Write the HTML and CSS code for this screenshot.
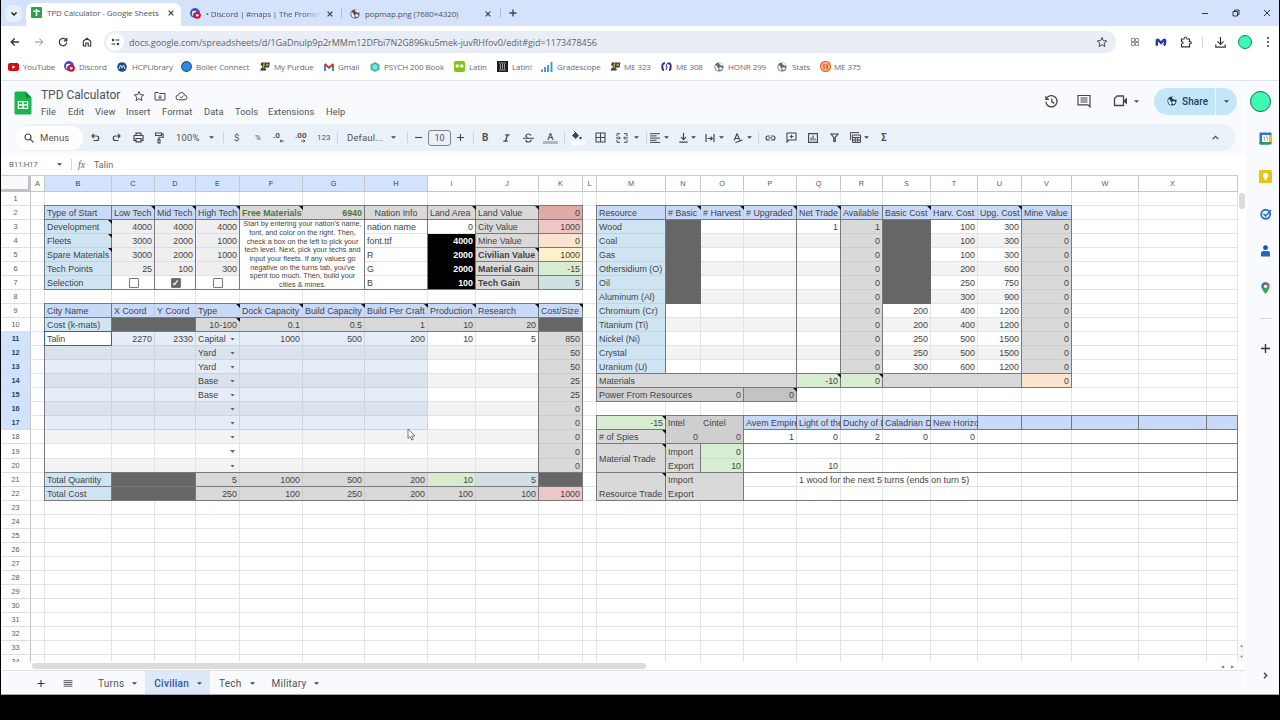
FILE: index.html
```html
<!DOCTYPE html>
<html lang="en">
<head>
<meta charset="utf-8">
<title>TPD Calculator - Google Sheets</title>
<link rel="stylesheet" href="styles.css">
</head>
<body>
<svg class="defs" width="0" height="0">
  <symbol id="globe" viewBox="0 0 24 24"><circle cx="12" cy="12" r="11" fill="currentColor"/><path d="M3 8c4 0 5 2 5 4s3 2 3 5-1 3-1 5c-5-2-8-7-7-14zM13 2c-2 2-1 4 1 4s2 3 4 3 3-1 4-1c-1-3-4-6-9-6zM13 13c3-1 7 0 7 2s-3 5-5 5-1-3-2-4-1-2 0-3z" fill="#f5f7fa"/></symbol>
  <symbol id="discord" viewBox="0 0 22 22"><circle cx="10" cy="10" r="10" fill="#4a53c4"/><path d="M5 6h8l-2 3-4 1-1 5H4z" fill="#fff"/><circle cx="14.500" cy="14.500" r="7.200" fill="#c8193f"/><circle cx="14.500" cy="14.500" r="2.600" fill="#fff"/></symbol>
  <symbol id="close" viewBox="0 0 10 10"><path d="M2 2l6 6M8 2l-6 6" stroke="#3c4043" stroke-width="1.500"/></symbol>
  <symbol id="caret" viewBox="0 0 10 10"><path d="M0 2.500h10L5 7.500z" fill="#444746"/></symbol>
  <symbol id="train" viewBox="0 0 24 20"><path d="M4 1h19l-2 11h-8l-1 3h3l-1 4H1l2-5h2l1-6H2z" fill="#3d3a27"/><path d="M8 3h4l-2 11H7zM15 4h5l-1 5h-5z" fill="#b9a56a"/></symbol>
  <symbol id="star" viewBox="0 0 24 24"><path d="M12 3l2.700 6.300 6.800.600-5.200 4.500 1.600 6.700L12 17.500l-5.900 3.600 1.600-6.700L2.500 9.900l6.800-.600z" fill="none" stroke="#444746" stroke-width="2"/></symbol>
</svg>

<div class="window">
  <div class="tabstrip">
    <span class="tab-search"><svg width="8" height="8" viewBox="0 0 8 8"><path d="M1.500 2.500L4 5l2.500-2.500" fill="none" stroke="#202124" stroke-width="1.500"/></svg></span>
    <div class="tab active">
      <svg width="11" height="11" viewBox="0 0 11 11"><rect width="11" height="11" rx="1" fill="#2ba24c"/><path d="M2 4.300h7M5.500 2v7" stroke="#fff" stroke-width="1.600"/></svg>
      <span class="tab-title">TPD Calculator - Google Sheets</span>
      <svg width="8" height="8"><use href="#close"/></svg>
    </div>
    <div class="tab">
      <svg width="11" height="11"><use href="#discord"/></svg>
      <span class="tab-title faded">• Discord | #maps | The Promet</span>
      <svg width="8" height="8"><use href="#close"/></svg>
    </div>
    <i class="tab-sep"></i>
    <div class="tab third">
      <svg width="10" height="10"><use href="#globe"/></svg>
      <span class="tab-title">popmap.png (7680×4320)</span>
      <svg width="8" height="8"><use href="#close"/></svg>
    </div>
    <i class="tab-sep"></i>
    <svg class="new-tab" width="8" height="8" viewBox="0 0 8 8"><path d="M4 .5v7M.5 4h7" stroke="#3c4043" stroke-width="1.300"/></svg>
    <div class="winbtns">
      <svg width="8" height="8" viewBox="0 0 8 8"><path d="M1 4.500h6" stroke="#202124" stroke-width=".9"/></svg>
      <svg width="8" height="8" viewBox="0 0 8 8"><path d="M1 2.500h4.500v4.500H1zM2.500 2.500V1h4.500v4.500H5.500" fill="none" stroke="#202124" stroke-width=".9"/></svg>
      <svg width="8" height="8" viewBox="0 0 8 8"><path d="M1 1l6 6M7 1L1 7" stroke="#202124" stroke-width=".9"/></svg>
    </div>
  </div>

  <div class="addressbar">
    <svg width="10" height="10" viewBox="0 0 10 10"><path d="M9 5H1.500M4.700 1.500L1.200 5l3.500 3.500" fill="none" stroke="#333" stroke-width="1.300"/></svg>
    <svg width="10" height="10" viewBox="0 0 10 10"><path d="M1 5h7.500M5.300 1.500L8.800 5 5.300 8.500" fill="none" stroke="#8b8f94" stroke-width="1"/></svg>
    <svg width="10" height="10" viewBox="0 0 10 10"><path d="M8.700 5.500A3.700 3.700 0 1 1 7.600 2.400L8.500 3.500M8.800 .8v3H5.800" fill="none" stroke="#333" stroke-width="1.200"/></svg>
    <svg width="10" height="10" viewBox="0 0 10 10"><path d="M1.300 4.200L5 1.200l3.700 3V9H6.200V6H3.800v3H1.300z" fill="none" stroke="#333" stroke-width="1.100"/></svg>
    <div class="omnibox">
      <span class="tune"><svg width="9" height="8" viewBox="0 0 9 8"><path d="M4.500 2h4M.5 6h4" stroke="#333" stroke-width="1.200"/><circle cx="2" cy="2" r="1.200" fill="#333"/><circle cx="7" cy="6" r="1.200" fill="#333"/></svg></span>
      <span class="url">docs.google.com/spreadsheets/d/1GaDnulp9p2rMMm12DFbi7N2G896ku5mek-juvRHfov0/edit#gid=1173478456</span>
      <svg width="12" height="12"><use href="#star"/></svg>
    </div>
    <div class="exts">
      <svg width="8" height="8" viewBox="0 0 8 8"><path d="M.5 .5h3v3h-3zM4.500 .5h3v3h-3zM.5 4.500h3v3h-3zM4.500 4.500h3v3h-3z" fill="none" stroke="#777" stroke-width=".8"/></svg>
      <svg width="12" height="10" viewBox="0 0 12 10"><path d="M1.800 8.800V4.500Q1.800 2 3.300 3L6 6 8.700 3Q10.200 2 10.200 4.500q0 3-1.500 3.800" fill="none" stroke="#2136b0" stroke-width="2.400"/></svg>
      <svg width="12" height="12" viewBox="0 0 12 12"><path d="M1.500 3H4Q4.300 1 5.500 1T7 3h2.500v2.500Q11.300 5.500 11.300 6.700T9.500 8v2.800h-8V8Q3 8 3 6.800T1.500 5.500z" fill="none" stroke="#333" stroke-width="1.200"/></svg>
      <i></i>
      <svg width="11" height="11" viewBox="0 0 11 11"><path d="M5.500 0v7M2.500 4.300l3 3 3-3M.8 7.500v2.700h9.400V7.500" fill="none" stroke="#333" stroke-width="1.200"/></svg>
      <span class="avatar"></span>
      <svg width="4" height="12" viewBox="0 0 4 12"><g fill="#333"><circle cx="2" cy="2" r="1"/><circle cx="2" cy="6" r="1"/><circle cx="2" cy="10" r="1"/></g></svg>
    </div>
  </div>

  <div class="bookmarks">
    <svg width="11" height="8" viewBox="0 0 11 8"><rect width="11" height="8" rx="2" fill="#d40b14"/><path d="M4.300 2.200v3.600L7.300 4z" fill="#fff"/></svg><span>YouTube</span>
    <svg width="11" height="11"><use href="#discord"/></svg><span>Discord</span>
    <svg width="10" height="10" viewBox="0 0 10 10"><circle cx="5" cy="5" r="4.800" fill="#1f4e86"/><path d="M2 7l1.500-4L5 6l1.500-3L8 7" stroke="#cfe0f2" fill="none"/></svg><span>HCPLibrary</span>
    <svg width="11" height="11" viewBox="0 0 11 11"><circle cx="5.500" cy="5.500" r="4.900" fill="#2e8be0" stroke="#1a5296" stroke-width="1.100"/></svg><span>Boiler Connect</span>
    <svg width="12" height="9"><use href="#train"/></svg><span>My Purdue</span>
    <svg width="10" height="8" viewBox="0 0 10 8"><path d="M1 8V1.500" stroke="#4285f4" stroke-width="2"/><path d="M9 8V1.500" stroke="#34a853" stroke-width="2"/><path d="M.7 1L5 4.700 9.300 1" fill="none" stroke="#d93025" stroke-width="2"/></svg><span>Gmail</span>
    <svg width="10" height="10" viewBox="0 0 10 10"><path d="M5 0l4.500 2.500v5L5 10 .5 7.500v-5z" fill="#3cb8a9"/><path d="M5 2l2.500 1.500v3L5 8 2.500 6.500v-3z" fill="#8bded3"/></svg><span>PSYCH 200 Book</span>
    <svg width="11" height="11" viewBox="0 0 11 11"><rect width="11" height="11" rx="2" fill="#7ac70c"/><circle cx="3.200" cy="5" r="1.800" fill="#fff"/><circle cx="7.800" cy="5" r="1.800" fill="#fff"/></svg><span>Latin</span>
    <svg width="11" height="11" viewBox="0 0 11 11"><rect width="11" height="11" fill="#1d1d1d"/><path d="M2 2h7M2 9h7M3.500 3v5M5.500 3v5M7.500 3v5" stroke="#9a9a9a"/></svg><span>Latin!</span>
    <svg width="12" height="10" viewBox="0 0 12 10"><path d="M1 10V7.500M4 10V5M7 10V3M10.500 10V0" stroke="#3b8fd6" stroke-width="1.800"/></svg><span>Gradescope</span>
    <svg width="11" height="9"><use href="#train"/></svg><span>ME 323</span>
    <svg width="11" height="9" viewBox="0 0 11 9"><path d="M4 1.200Q1.300 1 1.300 4.500T3 8M7 1.200Q9.700 1 9.700 4.500T8 8" fill="none" stroke="#2a3690" stroke-width="2"/><path d="M6.500 1L5 4.500l1.200.5L5 8" stroke="#2a3690" fill="none"/></svg><span>ME 308</span>
    <svg width="10" height="10"><use href="#globe"/></svg><span>HONR 299</span>
    <svg width="10" height="10"><use href="#globe"/></svg><span>Stats</span>
    <svg width="11" height="11" viewBox="0 0 11 11"><circle cx="5.500" cy="5.500" r="5" fill="#f7b98c" stroke="#dd6a2c" stroke-width="1.200"/><path d="M4 3v5M6.500 3q2 2.500 0 5" stroke="#c9561b" fill="none" stroke-width="1.200"/></svg><span>ME 375</span>
  </div>

  <div class="docs">
    <div class="docs-main">
      <div class="docs-header">
        <svg class="logo" width="18" height="24" viewBox="0 0 18 24"><path d="M2 .5h9.500l6 6V22a1.500 1.500 0 0 1-1.500 1.500H2A1.500 1.500 0 0 1 .5 22V2A1.500 1.500 0 0 1 2 .5z" fill="#16b64a"/><path d="M11.500 .5l6 6h-6z" fill="#0b8a35"/><path d="M3.700 10h10.600v8H3.700zM5 11.300v2h3.400v-2zm4.700 0v2H13v-2zM5 14.700v2h3.400v-2zm4.700 0v2H13v-2z" fill="#fff" fill-rule="evenodd"/></svg>
        <div class="titles">
          <div class="title-row">
            <span class="doc-title">TPD Calculator</span>
            <svg width="12" height="12"><use href="#star"/></svg>
            <svg width="12" height="12" viewBox="0 0 12 12"><path d="M1 2.500h3.500l1 1H11V10H1zM6 5v3.500M4.300 7L6 8.500 7.700 7" fill="none" stroke="#444746" stroke-width="1"/></svg>
            <svg width="13" height="12" viewBox="0 0 13 12"><path d="M3.500 9.800Q1 9.800 1 7.500T3.200 5.200Q4 2.500 6.500 2.500T9.900 5.300Q12 5.500 12 7.500T10 9.800zM4.800 6.700L6.200 8l2.400-2.500" fill="none" stroke="#444746" stroke-width="1"/></svg>
          </div>
          <div class="menus"><span>File</span><span>Edit</span><span>View</span><span>Insert</span><span>Format</span><span>Data</span><span>Tools</span><span>Extensions</span><span>Help</span></div>
        </div>
        <div class="actions">
          <svg width="15" height="15" viewBox="0 0 24 24"><path d="M4 7.500A9 9 0 1 1 3 12.500M3 3.500v5h5M12.500 7v5.500l4 2.500" fill="none" stroke="#444746" stroke-width="2"/></svg>
          <svg width="14" height="14" viewBox="0 0 14 14"><path d="M1 1.500h12v11.300l-2-2H1zM3.500 4h7M3.500 6h7M3.500 8h7" fill="none" stroke="#444746" stroke-width="1.200"/></svg>
          <svg width="15" height="14" viewBox="0 0 15 14"><path d="M4 2h6.500v9.500H1.500V4.500z" fill="none" stroke="#444746" stroke-width="1.300" stroke-linejoin="round"/><path d="M10.500 6.500L14 3.500v7l-3.500-3z" fill="#444746"/></svg>
          <svg width="5" height="5"><use href="#caret"/></svg>
          <div class="share"><svg width="10" height="10"><use href="#globe"/></svg><b>Share</b><i></i><svg width="5" height="5"><use href="#caret"/></svg></div>
        </div>
      </div>

      <div class="toolbar">
        <div class="menus-pill"><svg width="10" height="10" viewBox="0 0 10 10"><circle cx="4" cy="4" r="3" fill="none" stroke="#444746" stroke-width="1.200"/><path d="M6.200 6.200l3.300 3.300" stroke="#444746" stroke-width="1.200"/></svg><span>Menus</span></div>
        <svg width="9" height="9" viewBox="0 0 9 9"><path d="M3 1L1 3l2 2M1 3h4.500a2.200 2.200 0 0 1 0 4.500H2.500" fill="none" stroke="#444746" stroke-width="1.200"/></svg>
        <svg width="9" height="9" viewBox="0 0 9 9"><path d="M6 1l2 2-2 2M8 3H3.500a2.200 2.200 0 0 0 0 4.500H6.500" fill="none" stroke="#444746" stroke-width="1.200"/></svg>
        <svg width="11" height="11" viewBox="0 0 11 11"><path d="M3 3.500V1.200h5v2.300M3 8.500H1v-5h9v5H8M3 6.500h5v3.300H3z" fill="none" stroke="#444746" stroke-width="1.200"/></svg>
        <svg width="10" height="12" viewBox="0 0 10 12"><path d="M1.500 1h6v2.500h-6zM7.500 2h1.700v3.300H5v2M4 7.500h2v3.500H4z" fill="none" stroke="#444746" stroke-width="1.100"/></svg>
        <span class="t10">100%</span>
        <svg width="5" height="5"><use href="#caret"/></svg>
        <i></i>
        <span>$</span>
        <span class="small">%</span>
        <span class="dec">.0<svg width="5" height="4" viewBox="0 0 5 4"><path d="M5 2H1M2.500 .5L1 2l1.500 1.500" fill="none" stroke="#444746" stroke-width=".9"/></svg></span>
        <span class="dec">.00<svg width="5" height="4" viewBox="0 0 5 4"><path d="M0 2h4M2.500 .5L4 2 2.500 3.500" fill="none" stroke="#444746" stroke-width=".9"/></svg></span>
        <span class="small">123</span>
        <i></i>
        <span class="t10">Defaul...</span>
        <svg width="5" height="5"><use href="#caret"/></svg>
        <i></i>
        <svg width="7" height="7" viewBox="0 0 7 7"><path d="M0 3.500h7" stroke="#444746" stroke-width="1.100"/></svg>
        <span class="size">10</span>
        <svg width="7" height="7" viewBox="0 0 7 7"><path d="M0 3.500h7M3.500 0v7" stroke="#444746" stroke-width="1.100"/></svg>
        <i></i>
        <b>B</b>
        <svg width="7" height="8" viewBox="0 0 7 8"><path d="M2.200 .8h4.500M.3 7.200h4.500M4.600 .8L2.400 7.200" stroke="#444746" stroke-width="1.300"/></svg>
        <svg width="11" height="10" viewBox="0 0 11 10"><path d="M0 5.300h11" stroke="#444746"/><path d="M8 2.700Q7.500 1 5.500 1T3 2.500t1.500 1.800M8 6.500Q8.200 9 5.500 9T2.800 7" fill="none" stroke="#444746" stroke-width="1.200"/></svg>
        <span class="acolor">A</span>
        <i></i>
        <svg class="fill" width="14" height="15" viewBox="0 0 14 15"><rect y="11" width="14" height="4" fill="#fff"/><path d="M3 1l4.500 4.500L4.700 8.500 1.500 5.500 4.500 2.500" fill="#444746" stroke="#444746"/><circle cx="9.500" cy="8" r="1.200" fill="#444746"/></svg>
        <svg width="11" height="11" viewBox="0 0 11 11"><path d="M1 1h9v9H1zM5.500 1v9M1 5.500h9" fill="none" stroke="#444746" stroke-width="1.100"/></svg>
        <svg width="12" height="10" viewBox="0 0 12 10"><path d="M4 .7H1v2.500M1 6.800v2.500h3M8 .7h3v2.500M11 6.800v2.500H8M0 5h4M2.800 3.500L4.300 5 2.800 6.500M12 5H8M9.200 3.500L7.700 5l1.500 1.500" fill="none" stroke="#444746" stroke-width="1"/></svg>
        <svg width="5" height="5"><use href="#caret"/></svg>
        <i></i>
        <svg width="10" height="10" viewBox="0 0 10 10"><path d="M0 .7h10M0 2.900h6.500M0 5.100h10M0 7.300h6.500M0 9.400h10" stroke="#444746" stroke-width="1"/></svg>
        <svg width="5" height="5"><use href="#caret"/></svg>
        <svg width="9" height="10" viewBox="0 0 9 10"><path d="M4.500 0v6.500M2 4.200l2.500 2.500L7 4.200M.3 9.200h8.400" fill="none" stroke="#444746" stroke-width="1.200"/></svg>
        <svg width="5" height="5"><use href="#caret"/></svg>
        <svg width="10" height="10" viewBox="0 0 10 10"><path d="M1 1v8M9 1v8M2.500 5.500h4.500M5.500 3.700L7.300 5.500 5.500 7.300" fill="none" stroke="#444746" stroke-width="1.200"/></svg>
        <svg width="5" height="5"><use href="#caret"/></svg>
        <svg width="10" height="10" viewBox="0 0 10 10"><path d="M1 7.500L4 .8l3 6.700M2 5.500h4M2.500 9.500L9.500 7" fill="none" stroke="#444746" stroke-width="1.100"/></svg>
        <svg width="5" height="5"><use href="#caret"/></svg>
        <i></i>
        <svg width="11" height="6" viewBox="0 0 11 6"><path d="M4.800 1H3a2 2 0 0 0 0 4h1.800M6.200 1H8a2 2 0 0 1 0 4H6.200M3.500 3h4" fill="none" stroke="#444746" stroke-width="1.100"/></svg>
        <svg width="11" height="11" viewBox="0 0 11 11"><path d="M1 10V1h9v7H3zM5.500 2.700v3.600M3.700 4.500h3.600" fill="none" stroke="#444746" stroke-width="1.100"/></svg>
        <svg width="10" height="10" viewBox="0 0 10 10"><path d="M.6 .6h8.800v8.800H.6zM3 7.500V4.500M5 7.500v-5M7 7.500V5.500" fill="none" stroke="#444746" stroke-width="1.100"/></svg>
        <svg width="9" height="9" viewBox="0 0 9 9"><path d="M1 1h7L5.200 4.500v4H3.800v-4z" fill="none" stroke="#444746" stroke-width="1.200"/></svg>
        <svg width="11" height="11" viewBox="0 0 11 11"><path d="M.6 8V.6H9M2.500 3h8v7.400h-8zM2.500 5.500h8M2.500 8h8M5.200 5.500v5M7.800 5.500v5" fill="none" stroke="#444746" stroke-width="1"/></svg>
        <svg width="5" height="5"><use href="#caret"/></svg>
        <b>Σ</b>
        <svg class="collapse" width="7" height="5" viewBox="0 0 7 5"><path d="M.7 4.200L3.500 1.400l2.800 2.800" fill="none" stroke="#444746" stroke-width="1.200"/></svg>
      </div>

      <div class="formula">
        <span class="namebox">B11:H17</span>
        <svg width="5" height="5"><use href="#caret"/></svg>
        <i></i>
        <em>fx</em>
        <span>Talin</span>
      </div>

      <div class="sheet-area">
        <div class="sheet" id="sheet"></div>
        <div class="vscroll"><i class="thumb"></i><div class="arrows"><span>▲</span><span>▼</span></div></div>
      </div>
      <div class="hscroll"><i class="thumb"></i><div class="arrows"><span>◀</span><span>▶</span></div></div>
      <div class="sheet-tabs">
        <svg width="8" height="8" viewBox="0 0 8 8"><path d="M0 4h8M4 0v8" stroke="#333" stroke-width="1.200"/></svg>
        <svg class="list" width="10" height="8" viewBox="0 0 10 8"><path d="M0 .8h10M0 2.900h10M0 5h10M0 7.100h10" stroke="#444746" stroke-width="1"/></svg>
        <div class="stab turns">Turns<svg width="5" height="5"><use href="#caret"/></svg></div>
        <div class="stab on">Civilian<svg width="5" height="5"><use href="#caret"/></svg></div>
        <div class="stab">Tech<svg width="5" height="5"><use href="#caret"/></svg></div>
        <div class="stab">Military<svg width="5" height="5"><use href="#caret"/></svg></div>
      </div>
    </div>

    <aside class="side">
      <span class="avatar big"></span>
      <svg width="13" height="13" viewBox="0 0 13 13"><rect x=".5" y=".5" width="12" height="12" rx="1" fill="#2f74d0"/><path d="M10 3h2.500v7H10z" fill="#f6bd16"/><path d="M.5 10H10v2.500H1.500q-1 0-1-1z" fill="#2f9e50"/><path d="M10 10h2.500L10 12.500z" fill="#e04a35"/><path d="M3 3h7v7H3z" fill="#fff"/><path d="M4.300 5h1.200v3.500M7 5h1.400v3.500" fill="none" stroke="#5d98e4" stroke-width=".8"/></svg>
      <svg width="13" height="13" viewBox="0 0 13 13"><rect width="13" height="13" rx="1.500" fill="#edc01d"/><circle cx="6.500" cy="5.500" r="2.700" fill="#fff"/><path d="M5.300 8h2.400v2H5.300z" fill="#fff"/></svg>
      <svg width="12" height="12" viewBox="0 0 12 12"><circle cx="5.700" cy="6.300" r="4.500" fill="none" stroke="#2a70cf" stroke-width="1.900"/><path d="M3.500 5.800l2.200 2.200L11 2" fill="none" stroke="#2a70cf" stroke-width="1.600"/></svg>
      <svg width="9" height="12" viewBox="0 0 9 12"><circle cx="4.500" cy="2.700" r="2.400" fill="#174ea6"/><path d="M0 11.500V8.300Q0 6 2.300 6h4.400Q9 6 9 8.300v3.200z" fill="#2563c4"/></svg>
      <svg width="9" height="12" viewBox="0 0 9 12"><path d="M4.500 12Q.5 7.500.5 4.300A4 4 0 0 1 8.500 4.300Q8.500 7.500 4.500 12z" fill="#34a853"/><path d="M4.500 .3v4L1 6.500Q-.8 1.500 4.500 .3z" fill="#3a6fd0"/><path d="M4.500 .3Q8 .5 8.500 3.500L5 4z" fill="#d7553f"/><circle cx="4.500" cy="4.300" r="1.600" fill="#fff"/></svg>
      <hr>
      <svg width="9" height="9" viewBox="0 0 9 9"><path d="M0 4.500h9M4.500 0v9" stroke="#333" stroke-width="1.400"/></svg>
      <svg class="side-toggle" width="5" height="7" viewBox="0 0 5 7"><path d="M1 .8l2.700 2.700L1 6.200" fill="none" stroke="#444746" stroke-width="1.400"/></svg>
    </aside>
  </div>
  <svg class="cursor" width="9" height="13" viewBox="0 0 9 13"><path d="M1 1v9.500l2.200-2L4.800 12l1.500-.700-1.500-3.300H8z" fill="#fff" stroke="#555" stroke-width=".8"/></svg>
</div>
<script src="sheet.js"></script>
</body>
</html>
```
FILE: sheet.js
```js
const sheet = document.getElementById('sheet');
const LAST_ROW = 34;
const COLS = 'ABCDEFGHIJKLMNOPQRSTUVWXY';
const colNo = c => COLS.indexOf(c) + 2;

function parse(range) {
  const [a, b = a] = range.split(':');
  return { c1: colNo(a[0]), r1: +a.slice(1) + 1, c2: colNo(b[0]) + 1, r2: +b.slice(1) + 2 };
}
function add(range, cls, text = '') {
  const p = parse(range);
  const el = document.createElement('div');
  el.className = cls;
  el.style.gridArea = `${p.r1} / ${p.c1} / ${p.r2} / ${p.c2}`;
  if (text !== '') {
    const s = document.createElement('span');
    s.textContent = text;
    el.append(s);
  }
  sheet.append(el);
  return el;
}
// Fills every cell of a range with one background class.
function fill(range, cls) {
  const p = parse(range);
  for (let r = p.r1; r < p.r2; r++)
    for (let c = p.c1; c < p.c2; c++) add(COLS[c - 2] + (r - 1), 'cell ' + cls);
}
const box = (...ranges) => ranges.forEach(r => add(r, 'box'));
const lab = (ref, t, cls = '') => add(ref, 'txt ' + cls, t);
const num = (ref, t, cls = '') => add(ref, 'txt num ' + cls, t);
const row = (from, n, vals, fn = num) => vals.forEach((v, i) => v !== '' && fn(COLS[COLS.indexOf(from) + i] + n, v));
const column = (c, n, vals, fn = num) => vals.forEach((v, i) => v !== '' && fn(c + (n + i), v));

// Headers
const corner = document.createElement('div');
corner.className = 'corner';
sheet.append(corner);
[...COLS].forEach((c, i) => {
  const el = add(c + '0', 'colhead' + (i >= 1 && i <= 7 ? ' sel' : ''), c === 'Y' ? '' : c);
  el.style.gridRow = '1';
});
for (let r = 1; r <= LAST_ROW; r++) {
  const el = add('A' + r, 'rowhead' + (r >= 11 && r <= 17 ? ' sel' : ''), r);
  el.style.gridColumn = '1';
}
fill('A1:Y' + LAST_ROW, '');

// Start options
fill('B2:E2', 'head'); fill('B3:B7', 'blue'); fill('C3:E6', 'pale');
fill('F2:J2', 'grey'); fill('J3:J7', 'grey');
add('F3:G7', 'cell blank');
add('I4:I7', 'cell black');
['red', 'pink', 'orange', 'yellow', 'green', 'teal'].forEach((c, i) => fill('K' + (i + 2), c));
row('B', 2, ['Type of Start', 'Low Tech', 'Mid Tech', 'High Tech'], lab);
column('B', 3, ['Development', 'Fleets', 'Spare Materials', 'Tech Points', 'Selection'], lab);
[[4000, 4000, 4000], [3000, 2000, 1000], [3000, 2000, 1000], [25, 100, 300]].forEach((v, i) => row('C', i + 3, v));
['C7', 'D7', 'E7'].forEach(r => { add(r, 'check' + (r === 'D7' ? ' checked' : ''), r === 'D7' ? '✓' : ''); });
lab('F2', 'Free Materials', 'money'); num('G2', 6940, 'money');
add('F3:G7', 'help', "Start by entering your nation's name,\nfont, and color on the right. Then,\ncheck a box on the left to pick your\ntech level. Next, pick your techs and\ninput your fleets. If any values go\nnegative on the turns tab, you've\nspent too much. Then, build your\ncities & mines.");
lab('H2', 'Nation Info', 'mid'); lab('I2', 'Land Area');
column('H', 3, ['nation name', 'font.ttf', 'R', 'G', 'B'], lab);
num('I3', 0);
column('I', 4, [4000, 2000, 2000, 100], (r, v) => num(r, v, 'white'));
column('J', 2, ['Land Value', 'City Value', 'Mine Value'], lab);
column('J', 5, ['Civilian Value', 'Material Gain', 'Tech Gain'], (r, v) => lab(r, v, 'bold'));
column('K', 2, [0, 1000, 0, 1000, -15, 5]);
box('B2:E2', 'B2:B7', 'C2:C7', 'D2:D7', 'E2:E7', 'F2:G2', 'F2:G7', 'H2', 'H2:H7', 'I2', 'I2:I7', 'J2', 'J3', 'J4', 'J5', 'J6', 'J7', 'K2', 'K3', 'K4', 'K5', 'K6', 'K7');

// Cities
fill('B9:K9', 'head'); fill('B10', 'blue'); fill('C10:D10', 'dark'); fill('E10:J10', 'grey'); fill('K10', 'dark');
[12, 14, 16, 18, 20].forEach(r => fill(`B${r}:J${r}`, 'band'));
fill('K11:K20', 'grey');
fill('B21:B22', 'blue'); fill('C21:D22', 'dark'); fill('E21:H21', 'grey'); fill('E22:J22', 'grey');
fill('I21', 'green'); fill('J21', 'teal'); fill('K21', 'dark'); fill('K22', 'pink');
add('B11:H17', 'selection');
row('B', 9, ['City Name', 'X Coord', 'Y Coord', 'Type', 'Dock Capacity', 'Build Capacity', 'Build Per Craft', 'Production', 'Research', 'Cost/Size'], lab);
lab('B10', 'Cost (k-mats)'); row('E', 10, ['10-100', '0.1', '0.5', 1, 10, 20]);
row('C', 11, [2270, 2330, '', 1000, 500, 200, 10, 5, 850]);
column('E', 11, ['Capital', 'Yard', 'Yard', 'Base', 'Base'], lab);
for (let r = 11; r <= 20; r++) add('E' + r, 'drop');
column('K', 12, [50, 50, 25, 25, 0, 0, 0, 0, 0]);
lab('B21', 'Total Quantity'); lab('B22', 'Total Cost');
row('E', 21, [5, 1000, 500, 200, 10, 5]);
row('E', 22, [250, 100, 250, 200, 100, 100, 1000]);
box('B9:K9', 'B9:K10', 'B9:B10', 'B21:B22', 'B9:K22', 'K9:K22', 'K10', 'E10:J10', 'B21:K21', 'B21:K22', 'C21:D22');
add('B11', 'active-cell', 'Talin');

// Resources
fill('M2:V2', 'head'); fill('M3:M13', 'blue');
[4, 6, 8, 10, 12].forEach(r => { fill(`N${r}:Q${r}`, 'band'); fill(`S${r}:U${r}`, 'band'); });
add('N3:N8', 'cell dark'); add('S3:S8', 'cell dark');
fill('R3:R13', 'grey'); fill('V3:V13', 'grey');
add('M14:P14', 'cell grey'); fill('Q14:R14', 'green'); add('S14:U14', 'cell grey'); fill('V14', 'orange');
add('M15:N15', 'cell grey2'); fill('O15', 'grey2'); fill('P15', 'grey3');
row('M', 2, ['Resource', '# Basic', '# Harvest', '# Upgraded', 'Net Trade', 'Available', 'Basic Cost', 'Harv. Cost', 'Upg. Cost', 'Mine Value'], lab);
column('M', 3, ['Wood', 'Coal', 'Gas', 'Othersidium (O)', 'Oil', 'Aluminum (Al)', 'Chromium (Cr)', 'Titanium (Ti)', 'Nickel (Ni)', 'Crystal', 'Uranium (U)', 'Materials'], lab);
lab('M15', 'Power From Resources');
num('Q3', 1); num('Q14', -10);
column('R', 3, [1, 0, 0, 0, 0, 0, 0, 0, 0, 0, 0, 0]);
column('S', 9, [200, 200, 250, 250, 300]);
column('T', 3, [100, 100, 100, 200, 250, 300, 400, 400, 500, 500, 600]);
column('U', 3, [300, 300, 300, 600, 750, 900, 1200, 1200, 1500, 1500, 1200]);
column('V', 3, [0, 0, 0, 0, 0, 0, 0, 0, 0, 0, 0, 0]);
row('O', 15, [0, 0]);
box('M2:V2', 'M2:M13', 'Q2:Q13', 'R2:R14', 'V2:V14', 'M14:P14', 'Q14', 'M14:V14', 'M15:P15', 'P15');

// Trade
fill('M17', 'green'); fill('N17:O18', 'grey2'); fill('P17:Y17', 'head');
fill('M18', 'grey'); add('M19:M20', 'cell grey'); add('M21:M22', 'cell grey');
fill('N19:N20', 'grey'); fill('O19:O20', 'green'); add('N21:O22', 'cell grey');
num('M17', -15); lab('N17', 'Intel'); lab('O17', 'Cintel');
row('P', 17, ['Avem Empire', 'Light of the', 'Duchy of L', 'Caladrian D', 'New Horizon'], (r, v) => lab(r, v, 'clip'));
lab('M18', '# of Spies'); row('N', 18, [0, 0, 1, 0, 2, 0, 0]);
lab('M19:M20', 'Material Trade'); lab('M22', 'Resource Trade');
column('N', 19, ['Import', 'Export', 'Import', 'Export'], lab);
num('O19', 0); num('O20', 10); num('Q20', 10);
lab('Q21', '1 wood for the next 5 turns (ends on turn 5)');
box('M17', 'M17:M22', 'N17:O18', 'O19:O20', 'M17:O22', 'M17:Y18', 'M19:Y20', 'M21:Y22', 'P17', 'Q17', 'R17', 'S17', 'T17', 'U17', 'V17', 'W17', 'X17', 'Y17');

// Note markers
'C2 D2 E2 F2 B3 B4 B5 I2 J2 J5 N2 O2 P2 Q2 S2 U2 E9 F9 G9 H9 I9 J9 K9 E10 Q14 R14 P15 M17 M18 M19 M21'.split(' ').forEach(r => add(r, 'note'));
```
FILE: styles.css
```css
* { box-sizing: border-box; }
body { margin: 0; background: #000; font-family: "Open Sans", sans-serif; color: #505356; }
svg { display: block; flex: none; }
i { display: block; flex: none; }
.defs { position: absolute; }
.window { position: relative; width: 1278px; height: 695px; margin-left: 1px; overflow: hidden; background: #fff; border-bottom: 1px solid #a4a7aa; display: flex; flex-direction: column; }

.tabstrip { height: 26px; flex: none; background: #d4e3fb; display: flex; align-items: center; font-size: 8px; color: #505357; }
.tab-search { width: 17px; height: 17px; margin: 1px 4px 0; border-radius: 6px; background: #e6effc; display: grid; place-items: center; }
.tab { display: flex; align-items: center; height: 22px; margin-top: 4px; padding: 0 6px 3px 5px; width: 155px; }
.tab.active { background: #fff; border-radius: 7px 7px 0 0; height: 24px; padding-bottom: 5px; }
.tab:not(.active) { padding-left: 9px; width: 160px; padding-right: 7px; }
.tab.third { padding-left: 8px; width: 158px; padding-right: 8px; }
.tab-title { margin-left: 5px; flex: 1; min-width: 0; white-space: nowrap; overflow: hidden; letter-spacing: -.1px; }
.faded { flex: 0 0 115px; margin-right: auto; letter-spacing: -.17px; -webkit-mask-image: linear-gradient(90deg, #000 85%, transparent); mask-image: linear-gradient(90deg, #000 85%, transparent); }
.tab-sep { width: 1px; height: 10px; background: #a9bddb; }
.new-tab { margin-left: 8px; }
.winbtns { margin-left: auto; display: flex; gap: 23px; padding-right: 8px; }

.addressbar { height: 28px; flex: none; margin-top: 2px; display: grid; align-items: center; grid-template-columns: 24px 24px 24px 22px 1012px 1fr; padding-left: 9px; }
.omnibox { height: 22px; border-radius: 11px; background: #e9edf6; display: flex; align-items: center; padding: 0 8px 0 2px; }
.tune { width: 18px; height: 18px; border-radius: 50%; background: #fff; display: grid; place-items: center; }
.url { flex: 1; margin-left: 5px; font-size: 9px; letter-spacing: -.02px; white-space: nowrap; color: #606368; }
.exts { display: grid; grid-template-columns: 24px 25px 22px 13px 23px 28px 8px; align-items: center; padding-left: 15px; }
.exts i { width: 1px; height: 10px; background: #ccd3dd; }
.avatar { width: 14px; height: 14px; border-radius: 50%; background: #3dfbb2; border: 1px solid #16805c; }
.avatar.big { width: 21px; height: 21px; border: 1px solid #18664a; }

.bookmarks { height: 25px; flex: none; border-bottom: 1px solid #dfe4ea; display: grid; align-items: center; font-size: 8px; letter-spacing: -.1px; white-space: nowrap; color: #66696e; padding: 0 0 3px 7px;
  grid-template-columns: 15px 41px 15px 38px 15px 49px 15px 63px 15px 50px 14px 32px 14px 70px 15px 28px 15px 29px 16px 53px 14px 37px 15px 38px 14px 49px 15px 28px 14px 40px; }

.docs { flex: 1; display: flex; min-height: 0; background: #f8fafd; }
.docs-main { width: 1244px; flex: none; display: flex; flex-direction: column; min-height: 0; font-family: Roboto, sans-serif; }
.docs-header { height: 43px; flex: none; display: flex; padding-left: 13px; }
.logo { margin-top: 10px; }
.titles { margin-left: 9px; }
.title-row { display: grid; grid-template-columns: 92px 21px 21px 13px; align-items: center; height: 16px; margin-top: 6px; }
.doc-title { font-size: 12px; letter-spacing: -.05px; white-space: nowrap; }
.title-row svg { margin-top: 2px; }
.menus { display: grid; grid-template-columns: 27px 27px 31px 36px 42px 31px 33px 58px 30px; font-size: 9.300px; letter-spacing: .1px; margin-top: 3px; line-height: 12px; }
.actions { margin-left: auto; display: grid; grid-template-columns: 33px 36px 21px 20px 83px; align-items: center; height: 40px; padding-right: 8px; }
.share { width: 83px; height: 27px; border-radius: 14px; background: #c4e6f9; display: flex; align-items: center; padding-left: 13px; font-size: 10px; color: #17415f; }
.share b { margin-left: 5px; width: 33px; font-weight: 500; letter-spacing: .1px; }
.share i { width: 1px; height: 27px; background: #edf7fd; margin: 0 8px 0 0; }

.toolbar { height: 27px; flex: none; margin-left: 15px; width: 1219px; border-radius: 14px; background: #eaf1f9; display: grid; align-items: center; font-size: 9.500px; white-space: nowrap;
  grid-template-columns: 75px 21px 21px 21px 22px 33px 14px 11px 21px 18px 22px 22px 20px 10px 44px 16px 8px 13px 29px 16px 9px 21px 20px 20px 21px 7px 24px 21px 18px 12px 4px 14px 15px 12px 14px 14px 14px 14px 11px 7px 21px 22px 22px 20px 14px 17px 331px 7px; }
.toolbar i, .formula i { width: 1px; height: 11px; background: #cbd2dc; }
.toolbar b { font-size: 10px; }
.small { font-size: 8px; }
.t10 { font-size: 9.500px; letter-spacing: .15px; }
.dec { font-size: 8px; font-weight: 700; line-height: 7px; }
.dec svg { margin-left: 6px; }
.size { width: 23px; height: 16px; border: 1px solid #80858b; border-radius: 3px; text-align: center; line-height: 14px; font-size: 9px; }
.acolor { width: 15px; border-bottom: 3px solid #b3b8be; text-align: center; line-height: 9px; font-weight: 500; }
.menus-pill { display: flex; align-items: center; width: 67px; height: 24px; border-radius: 12px; background: #fff; padding-left: 8px; }
.menus-pill span { margin-left: 6px; letter-spacing: .1px; }

.formula { height: 24px; flex: none; border-top: 4px solid #f8fafd; background: #fff; display: grid; grid-template-columns: 48px 14px 7px 16px auto; align-items: center; padding: 0 0 1px 8px; font-size: 9px; color: #66696d; }
.namebox { font-size: 8px; letter-spacing: -.3px; }
.formula em { font-family: "Liberation Serif", serif; font-size: 10px; }

.sheet-area { height: 487px; flex: none; display: flex; background: #fff; overflow: hidden; }
.sheet { width: 1237px; flex: none; display: grid; align-content: start; border-top: 1px solid #c9cccf; font-family: "Liberation Sans", Arial, sans-serif; font-size: 8.890px; color: #444; 
  grid-template-columns: 30px 14px 67px 43px 41px 44px 63px 62px 63px 48px 63px 44px 14px 69px 35px 43px 53px 44px 42px 48px 47px 44px 50px 67px 68px 31px;
  grid-template-rows: 16px repeat(18, 14px) 15px repeat(15, 14px); }
.corner { grid-area: 1 / 1; background: #f8f9fa; border-right: 3px solid #bfc3c6; border-bottom: 3px solid #bfc3c6; }
.colhead, .rowhead { display: grid; place-items: center; font-size: 7.300px; border-right: 1px solid #c4c7c5; border-bottom: 1px solid #c4c7c5; background: #fff; color: #575b5f; }
.rowhead { border-bottom-color: #dcdedf; }
.sel { background: #d3e3fd; color: #1f3e78; }
.rowhead.sel { font-weight: 700; }
.cell { border-right: 1px solid #e2e3e3; border-bottom: 1px solid #e2e3e3; background: #fff; min-width: 0; }
.head { background: #c9daf8; border-color: #c0cfea; }
.blue { background: #cfe4f3; border-color: #bfd4e3; }
.pale { background: #efefef; border-color: #dedede; }
.grey { background: #d9d9d9; border-color: #cccccc; }
.grey2 { background: #cfcfcf; border-color: #cfcfcf; }
.grey3 { background: #c3c3c3; border-color: #c3c3c3; }
.band { background: #f3f3f3; }
.dark { background: #666; border-color: #666; }
.black { background: #000; border-color: #000; }
.blank { border: 0; }
.red { background: #e0aba7; }
.pink { background: #efc6c8; }
.orange { background: #fbe4cf; }
.yellow { background: #fdf1cb; }
.green { background: #d8ecd2; border-color: #cbdcc6; }
.teal { background: #d0e1e4; }
.box { margin: -1px 0 0 -1px; border: 1px solid #77797c; z-index: 1; pointer-events: none; }
.txt { z-index: 2; display: flex; align-items: center; padding: 0 3px 0 2px; white-space: nowrap; min-width: 0; }
.num { justify-content: flex-end; }
.mid { justify-content: center; }
.clip { overflow: hidden; padding-right: 0; }
.bold, .money, .white { font-weight: 700; }
.money { color: #4d7a3d; }
.white { color: #fff; }
.help { z-index: 2; white-space: pre; text-align: center; font-size: 7.250px; line-height: 8.700px; display: flex; justify-content: center; align-items: center; }
.note { z-index: 3; justify-self: end; align-self: start; width: 4px; height: 4px; background: #111; clip-path: polygon(0 0, 100% 0, 100% 100%); }
.check { z-index: 2; place-self: center; width: 10px; height: 10px; border: 1px solid #777; border-radius: 1px; background: #fff; margin-bottom: 1px; }
.checked { background: #666; color: #fff; font-size: 9px; line-height: 8px; text-align: center; font-weight: 700; }
.drop { z-index: 2; justify-self: end; align-self: center; width: 5px; height: 3px; margin-right: 5px; background: #666; clip-path: polygon(0 0, 100% 0, 50% 100%); }
.selection { background: rgba(20, 100, 190, .11); z-index: 1; }
.active-cell { z-index: 3; margin: -1px 0 0 -1px; border: 1px solid #2a62b8; background: #fff; padding-left: 2px; display: flex; align-items: center; }

.vscroll { width: 7px; display: flex; flex-direction: column; padding-top: 18px; align-items: end; }
.vscroll .thumb { width: 6px; height: 16px; border-radius: 3px; background: #d9dbdf; }
.arrows { font-size: 4px; color: #777; }
.vscroll .arrows { margin-top: auto; display: grid; line-height: 11px; width: 7px; text-align: center; background: #f8f8f8; }
.hscroll { height: 9px; flex: none; display: flex; align-items: center; background: #fff; border-bottom: 1px solid #dfe2e5; padding-left: 31px; }
.hscroll .thumb { width: 614px; height: 6px; border-radius: 3px; background: #dadce0; }
.hscroll .arrows { margin-left: auto; display: flex; gap: 7px; padding-right: 11px; }
.sheet-tabs { flex: 1; display: flex; align-items: center; padding-left: 36px; font-size: 10px; letter-spacing: .25px; }
.sheet-tabs > * { padding-top: 1px; }
.list { margin-left: 18px; }
.stab { display: flex; align-items: center; justify-content: space-between; height: 100%; padding: 1px 8px 0 9px; gap: 8px; }
.turns { margin-left: 16px; }
.stab.on { background: #dfe8f8; color: #2b57a8; font-weight: 500; }
.side { flex: 1; display: flex; flex-direction: column; align-items: center; padding: 10px 0 0 4px; border-left: 1px solid #fff; }
.side > .avatar { margin-right: 10px; }
.side > svg { margin-top: 25px; }
.side > .avatar + svg { margin-top: 20px; }
.side hr { width: 12px; border: 0; border-top: 1px solid #d3d7dc; margin: 24px 0 0; }
.side > .side-toggle { margin: auto 0 15px; }
.cursor { position: absolute; left: 406px; top: 428px; z-index: 9; }
```
